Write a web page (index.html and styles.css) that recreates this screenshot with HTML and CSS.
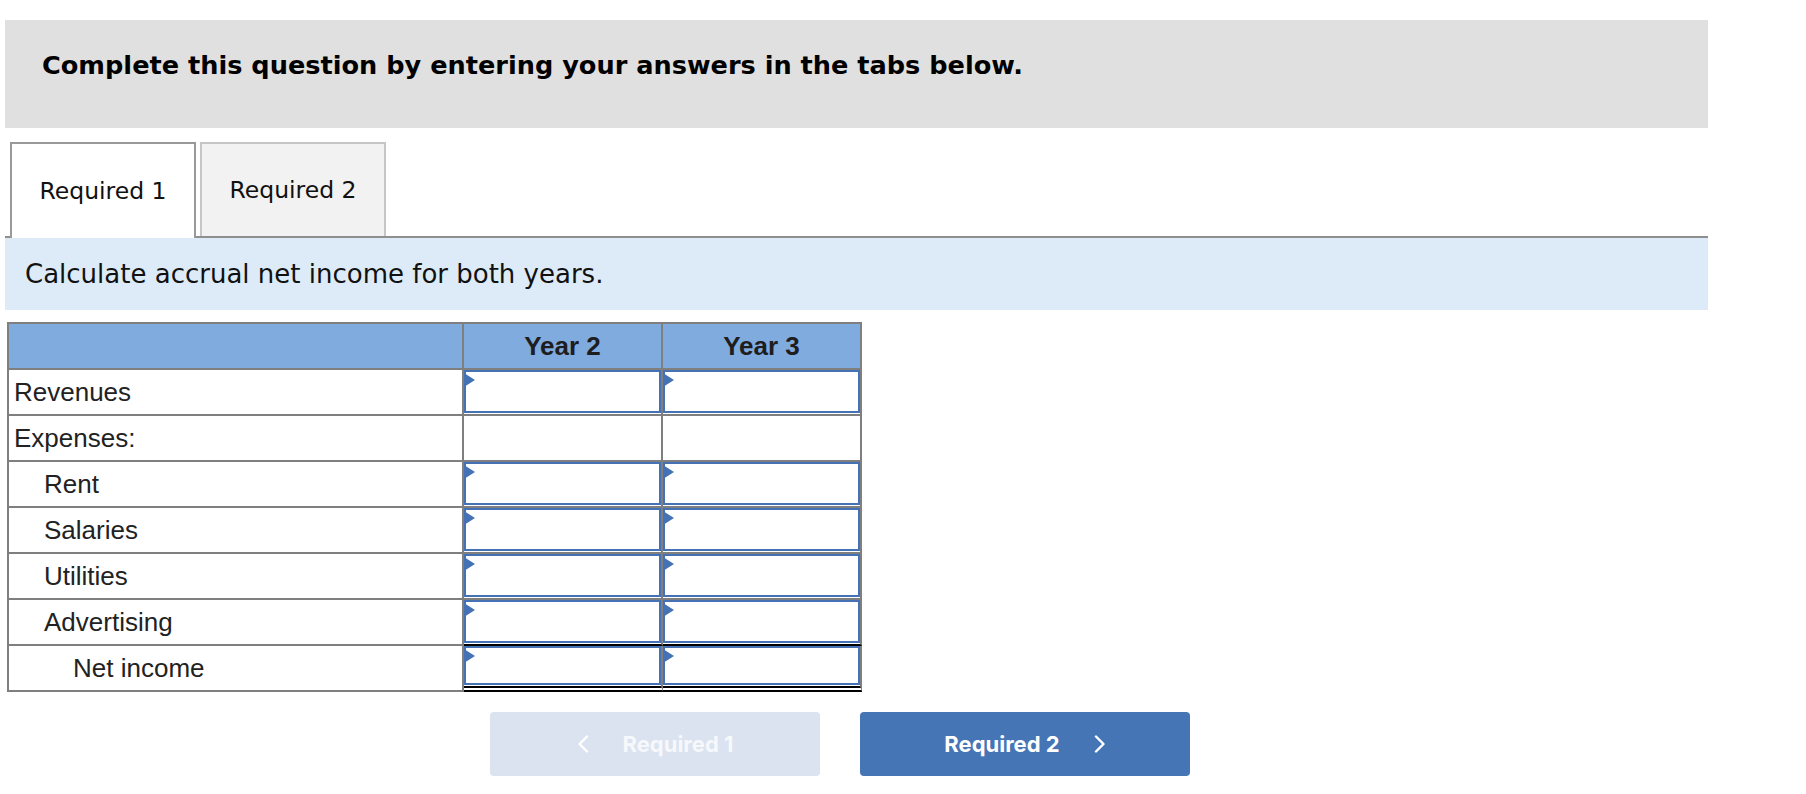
FILE: index.html
```html
<!DOCTYPE html>
<html>
<head>
<meta charset="utf-8">
<link rel="stylesheet" href="styles.css">
</head>
<body>
<div class="page">
  <div class="prompt">Complete this question by entering your answers in the tabs below.</div>

  <div class="tabs">
    <div class="tab tab-active">Required 1</div>
    <div class="tab tab-idle">Required 2</div>
  </div>

  <div class="instruction">Calculate accrual net income for both years.</div>

  <table class="grid">
    <tr class="head">
      <th class="c1"></th>
      <th class="c2">Year 2</th>
      <th class="c3">Year 3</th>
    </tr>
    <tr>
      <td class="c1 lbl">Revenues</td>
      <td class="c2 inp"><div class="box"><span class="flag"></span></div></td>
      <td class="c3 inp"><div class="box"><span class="flag"></span></div></td>
    </tr>
    <tr>
      <td class="c1 lbl">Expenses:</td>
      <td class="c2"></td>
      <td class="c3"></td>
    </tr>
    <tr>
      <td class="c1 lbl ind1">Rent</td>
      <td class="c2 inp"><div class="box"><span class="flag"></span></div></td>
      <td class="c3 inp"><div class="box"><span class="flag"></span></div></td>
    </tr>
    <tr>
      <td class="c1 lbl ind1">Salaries</td>
      <td class="c2 inp"><div class="box"><span class="flag"></span></div></td>
      <td class="c3 inp"><div class="box"><span class="flag"></span></div></td>
    </tr>
    <tr>
      <td class="c1 lbl ind1">Utilities</td>
      <td class="c2 inp"><div class="box"><span class="flag"></span></div></td>
      <td class="c3 inp"><div class="box"><span class="flag"></span></div></td>
    </tr>
    <tr>
      <td class="c1 lbl ind1">Advertising</td>
      <td class="c2 inp before-total"><div class="box"><span class="flag"></span></div></td>
      <td class="c3 inp before-total"><div class="box"><span class="flag"></span></div></td>
    </tr>
    <tr>
      <td class="c1 lbl ind2">Net income</td>
      <td class="c2 inp total"><div class="box box-total"><span class="flag"></span></div></td>
      <td class="c3 inp total"><div class="box box-total"><span class="flag"></span></div></td>
    </tr>
  </table>

  <div class="nav">
    <div class="btn btn-off">
      <svg class="chev" width="12" height="18" viewBox="0 0 12 18"><polyline points="10,1.5 2.5,9 10,16.5" fill="none" stroke="#ffffff" stroke-width="2.4" stroke-linecap="round" stroke-linejoin="round"/></svg>
      <span>Required 1</span>
    </div>
    <div class="btn btn-on">
      <span>Required 2</span>
      <svg class="chev" width="12" height="18" viewBox="0 0 12 18"><polyline points="2,1.5 9.5,9 2,16.5" fill="none" stroke="#ffffff" stroke-width="2.4" stroke-linecap="round" stroke-linejoin="round"/></svg>
    </div>
  </div>
</div>
</body>
</html>
```

FILE: styles.css
```css
html, body {
  margin: 0;
  padding: 0;
  background: #ffffff;
}

.page {
  margin: 20px 0 0 5px;
  width: 1703px;
}

.prompt {
  background: #e0e0e0;
  height: 108px;
  box-sizing: border-box;
  padding: 30px 0 0 37px;
  font-family: "DejaVu Sans", Verdana, sans-serif;
  font-weight: bold;
  font-size: 25.6px;
  line-height: 30px;
  color: #000000;
}

.tabs {
  display: flex;
  gap: 4px;
  margin-top: 14px;
  padding-left: 5px;
  border-bottom: 2px solid #8f8f8f;
  height: 94px;
}

.tab {
  width: 186px;
  box-sizing: border-box;
  display: flex;
  align-items: center;
  justify-content: center;
  font-family: "DejaVu Sans", Verdana, sans-serif;
  font-size: 23.5px;
  color: #111111;
}

.tab-active {
  height: 96px;
  background: #ffffff;
  border: 2px solid #999999;
  border-bottom: none;
  position: relative;
  z-index: 1;
}

.tab-idle {
  height: 94px;
  background: #f2f2f2;
  border: 2px solid #c6c6c6;
  border-bottom: none;
}

.instruction {
  background: #ddebf8;
  height: 72px;
  box-sizing: border-box;
  padding-left: 20px;
  display: flex;
  align-items: center;
  font-family: "DejaVu Sans", Verdana, sans-serif;
  font-size: 26px;
  color: #111111;
}

.grid {
  margin: 12px 0 0 2px;
  border-collapse: separate;
  border-spacing: 0;
  border-top: 2px solid #7f7f7f;
  border-left: 2px solid #7f7f7f;
  font-family: "Liberation Sans", Arial, sans-serif;
  font-size: 26px;
  color: #222222;
}

.grid th, .grid td {
  padding: 0;
  border-right: 2px solid #7f7f7f;
  border-bottom: 2px solid #7f7f7f;
  height: 44px;
  box-sizing: content-box;
}

.grid .c1 { width: 453px; }
.grid .c2 { width: 197px; }
.grid .c3 { width: 197px; }

.head th {
  background: #80abdf;
  font-weight: bold;
  text-align: center;
  vertical-align: middle;
  color: #1e1e1e;
}

.lbl {
  padding-left: 5px !important;
  vertical-align: middle;
  line-height: 44px;
}

.ind1 { padding-left: 35px !important; }
.ind2 { padding-left: 64px !important; }

.grid .lbl.c1 { width: 448px; }
.grid .ind1.c1 { width: 418px; }
.grid .ind2.c1 { width: 389px; }

.inp {
  vertical-align: top;
}

.box {
  position: relative;
  height: 43px;
  margin-bottom: 1px;
  box-sizing: border-box;
  border: 2px solid #4472b4;
  background: #ffffff;
}

.flag {
  position: absolute;
  left: -2px;
  top: 1px;
  width: 0;
  height: 0;
  border-left: 11px solid #4472b4;
  border-top: 7px solid transparent;
  border-bottom: 7px solid transparent;
}

.grid td.before-total {
  border-bottom-color: #000000;
}

.grid td.total {
  border-bottom: 6px double #000000;
  height: 40px;
}

.box-total {
  height: 39px;
  margin-bottom: 1px;
}

.nav {
  display: flex;
  gap: 40px;
  margin: 20px 0 0 485px;
}

.btn {
  width: 330px;
  height: 64px;
  box-sizing: border-box;
  border-radius: 4px;
  display: flex;
  align-items: center;
  justify-content: center;
  gap: 34px;
  font-family: Inter, Roboto, sans-serif;
  font-weight: bold;
  font-size: 22px;
}

.btn-off {
  background: #dae3ef;
  color: #f6f8fb;
}

.btn-on {
  background: #4575b5;
  color: #ffffff;
}

.chev {
  display: block;
}
```
